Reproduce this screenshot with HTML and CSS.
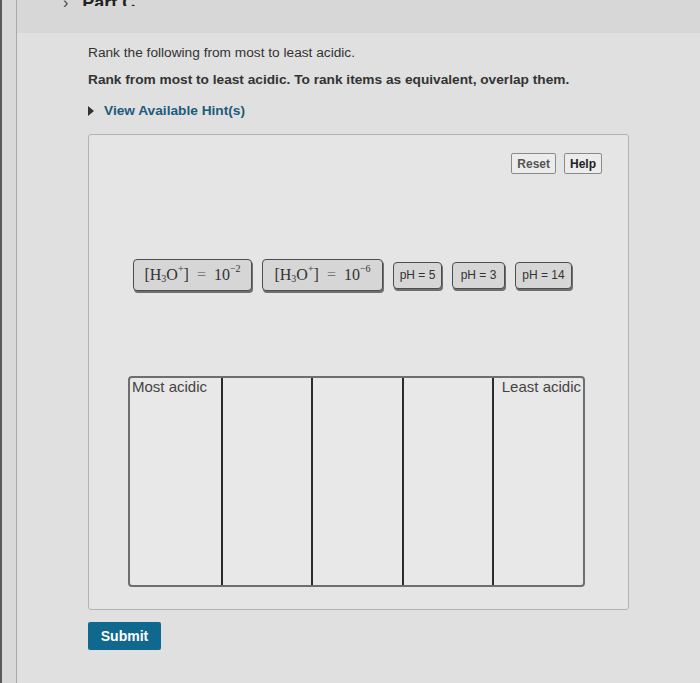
FILE: index.html
```html
<!DOCTYPE html>
<html>
<head>
<meta charset="utf-8">
<link rel="stylesheet" href="styles.css">
</head>
<body>
<div class="frame">
  <div class="rail"></div>
  <div class="main">
    <div class="header"><span class="chev">›</span><span class="part">Part C</span></div>
    <div class="content">
      <p class="intro">Rank the following from most to least acidic.</p>
      <p class="instr">Rank from most to least acidic. To rank items as equivalent, overlap them.</p>
      <div class="hint"><span class="tri"></span>View Available Hint(s)</div>
      <div class="box">
        <div class="tools">
          <span class="tbtn">Reset</span>
          <span class="tbtn">Help</span>
        </div>
        <div class="items">
          <div class="item math w1">[H<span class="lo">3</span>O<span class="hi">+</span>]<span class="eq">=</span>10<span class="hi">−2</span></div>
          <div class="item math w2">[H<span class="lo">3</span>O<span class="hi">+</span>]<span class="eq">=</span>10<span class="hi">−6</span></div>
          <div class="item ph w3">pH = 5</div>
          <div class="item ph w4">pH = 3</div>
          <div class="item ph w5">pH = 14</div>
        </div>
        <div class="bins">
          <div class="bin"><span class="lbl">Most acidic</span></div>
          <div class="bin"></div>
          <div class="bin"></div>
          <div class="bin"></div>
          <div class="bin right"><span class="lbl">Least acidic</span></div>
        </div>
      </div>
      <div class="submit">Submit</div>
    </div>
  </div>
</div>
</body>
</html>
```
FILE: styles.css
```css
html, body {
  margin: 0;
  padding: 0;
  background: #e0e0e0;
}
body {
  font-family: "Liberation Sans", Arial, sans-serif;
  color: #333;
  width: 700px;
  height: 683px;
  overflow: hidden;
}
.frame {
  display: flex;
  height: 683px;
  border-left: 2px solid #5a5a5a;
}
.rail {
  width: 14px;
  flex: none;
  border-right: 1px solid #a8a8a8;
  background: #d9d9d9;
}
.main {
  flex: 1;
  display: flex;
  flex-direction: column;
}
.header {
  height: 33px;
  background: #d7d7d7;
  display: flex;
  align-items: flex-start;
  padding-left: 46px;
}
.chev {
  font-size: 16px;
  color: #444;
  line-height: 6px;
}
.part {
  font-size: 18px;
  font-weight: bold;
  color: #222;
  line-height: 6px;
  height: 6px;
  overflow: hidden;
  margin-left: 14px;
  display: flex;
  align-items: flex-end;
}
.content {
  padding-left: 71px;
}
.intro {
  margin: 12px 0 0 0;
  font-size: 13.7px;
  line-height: 16px;
}
.instr {
  margin: 11px 0 0 0;
  font-size: 13.7px;
  font-weight: bold;
  line-height: 16px;
}
.hint {
  margin-top: 15px;
  font-size: 13.7px;
  line-height: 16px;
  font-weight: bold;
  color: #1d5b7c;
  display: flex;
  align-items: center;
}
.tri {
  width: 0;
  height: 0;
  border-top: 5px solid transparent;
  border-bottom: 5px solid transparent;
  border-left: 6px solid #333;
  margin-right: 10px;
}
.box {
  margin-top: 15px;
  width: 539px;
  height: 474px;
  box-sizing: content-box;
  border: 1px solid #b3b3b3;
  border-radius: 3px;
  background: #e5e5e5;
  display: flex;
  flex-direction: column;
}
.tools {
  display: flex;
  justify-content: flex-end;
  gap: 8px;
  padding: 18px 26px 0 0;
}
.tbtn {
  display: inline-flex;
  align-items: center;
  justify-content: center;
  height: 19px;
  padding: 0 5px;
  border: 1px solid #8a8a8a;
  border-radius: 2px;
  background: #ececec;
  font-size: 12px;
  font-weight: bold;
  color: #555;
}
.tbtn + .tbtn {
  color: #222;
}
.items {
  display: flex;
  align-items: center;
  gap: 10px;
  margin-top: 84px;
  padding-left: 44px;
  height: 34px;
}
.item {
  box-sizing: border-box;
  display: flex;
  align-items: center;
  justify-content: center;
  background: #d6d6d6;
  border: 1px solid #4d4d4d;
  border-radius: 4px;
  box-shadow: 1px 2px 0 #6f6f6f;
  color: #333;
}
.math {
  height: 32px;
  font-family: "Liberation Serif", "Times New Roman", serif;
  font-size: 16px;
  white-space: nowrap;
  line-height: 16px;
}
.lo {
  font-size: 10px;
  position: relative;
  top: 4px;
}
.hi {
  font-size: 10px;
  position: relative;
  top: -6px;
}
.eq {
  color: #777;
  margin: 0 8px;
}
.ph {
  height: 27px;
  font-size: 12px;
}
.w1 { width: 119px; }
.w2 { width: 121px; }
.w3 { width: 49px; }
.w4 { width: 53px; }
.w5 { width: 57px; }
.bins {
  margin-top: 84px;
  margin-left: 39px;
  width: 457px;
  height: 211px;
  box-sizing: border-box;
  border: 2px solid #6e6e6e;
  border-radius: 4px;
  display: grid;
  grid-template-columns: repeat(5, 1fr);
  background: #e8e8e8;
}
.bin {
  border-left: 2px solid #2b2b2b;
  padding: 1px 2px;
  font-size: 15px;
  color: #444;
  line-height: 16px;
}
.bin:first-child {
  border-left: none;
}
.right {
  text-align: right;
}
.submit {
  margin-top: 12px;
  width: 73px;
  height: 28px;
  background: #10688f;
  color: #fff;
  font-size: 14px;
  font-weight: bold;
  border-radius: 2px;
  display: flex;
  align-items: center;
  justify-content: center;
}
```
